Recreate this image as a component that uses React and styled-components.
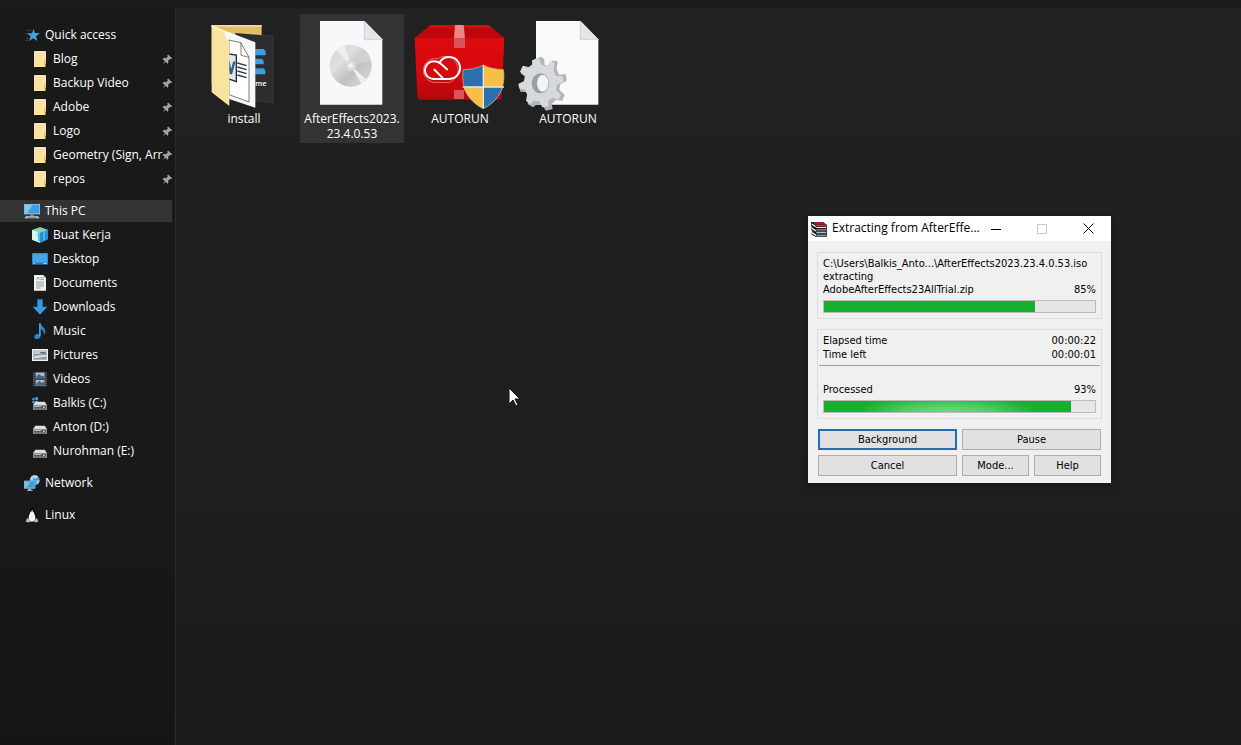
import React from 'react'
import styled, { createGlobalStyle } from 'styled-components'

const GlobalStyle = createGlobalStyle`
  * {
    box-sizing: border-box;
  }
  body {
    margin: 0;
    background: #1e1e1e;
    font-family: 'Open Sans', 'Noto Sans', sans-serif;
    font-size: 12px;
  }
`

const Explorer = styled.div`
  position: relative;
  display: flex;
  min-height: 100vh;
  overflow: hidden;
  border-top: 8px solid #1a1a1a;
  color: #fff;
  background: linear-gradient(#212121, #1f1f1f 60%, #1b1b1b);
`

const Sidebar = styled.nav`
  flex: none;
  width: 176px;
  padding-top: 15px;
  border-right: 1px solid #2b2b2b;
  background: linear-gradient(#191919, #191919 60%, #151515);
`

const Section = styled.div`
  display: flex;
  flex-direction: column;
  margin-bottom: 8px;
`

const NavItem = styled.a`
  display: flex;
  align-items: center;
  gap: 5px;
  height: 24px;
  margin-right: 3px;
  padding-left: ${props => (props.$nested ? 32 : 24)}px;
  border: solid transparent;
  border-width: 1px 0;
  background: ${props => (props.$active ? '#333333' : 'transparent')};
  background-clip: padding-box;
  color: #fff;
  text-decoration: none;
`

const NavLabel = styled.span`
  flex: 1;
  min-width: 0;
  padding-bottom: 2px;
  white-space: nowrap;
`

const SmallIcon = styled.svg`
  flex: none;
  width: 16px;
  height: 16px;
`

const Pin = styled.svg`
  flex: none;
  width: 11px;
  height: 11px;
  margin: 0 -1px 0 -5px;
`

const Files = styled.main`
  display: flex;
  flex: 1;
  flex-wrap: wrap;
  align-items: flex-start;
  align-content: flex-start;
  gap: 4px;
  padding: 6px 16px;
`

const FileTile = styled.button`
  display: flex;
  flex-direction: column;
  align-items: center;
  width: 104px;
  padding: 1px 0 2px;
  border: 0;
  background: ${props => (props.$selected ? '#333333' : 'transparent')};
  color: #fff;
  font: inherit;
  line-height: 15px;
`

const BigIcon = styled.svg`
  width: 96px;
  height: 96px;
`

const Dialog = styled.section`
  position: absolute;
  top: 208px;
  left: 808px;
  width: 303px;
  background: #f0f0f0;
  color: #000;
  font-family: 'DejaVu Sans Condensed', 'DejaVu Sans', sans-serif;
  font-size: 11px;
  box-shadow: 0 2px 8px rgba(0, 0, 0, 0.4);
`

const TitleBar = styled.header`
  display: flex;
  align-items: center;
  height: 25px;
  padding-left: 3px;
  background: #fff;
`

const Title = styled.h1`
  flex: 1;
  min-width: 0;
  margin: 0 0 0 5px;
  padding-bottom: 2px;
  font-family: 'Open Sans', 'Noto Sans', sans-serif;
  font-size: 12px;
  font-weight: 400;
  white-space: nowrap;
`

const WindowButton = styled.button`
  display: flex;
  flex: none;
  align-items: center;
  justify-content: center;
  width: 46px;
  height: 25px;
  padding: 0;
  border: 0;
  background: transparent;
`

const DialogBody = styled.div`
  display: flex;
  flex-direction: column;
  gap: 10px;
  padding: 11px 9px 7px;
`

const Group = styled.div`
  padding: 4px 5px 5px;
  border: 1px solid #dcdcdc;
`

const Path = styled.p`
  margin: 0;
  line-height: 13px;
  white-space: nowrap;
`

const Line = styled.div`
  display: flex;
  justify-content: space-between;
  line-height: 14px;
`

const Divider = styled.hr`
  height: 1px;
  margin: 3px -4px 17px;
  border: 0;
  background: #a0a0a0;
`

const Progress = styled.progress`
  display: block;
  width: 100%;
  height: 13px;
  margin-top: 3px;
  border: 1px solid #bcbcbc;
  appearance: none;

  &::-webkit-progress-bar {
    background: #e6e6e6;
  }
  &::-webkit-progress-value {
    background: ${props => (props.$glow
      ? 'radial-gradient(ellipse 90px 16px at 50% 100%, #6fdb7f, #4fc962 50%, #16b02f)'
      : '#16b02f')};
  }
`

const Actions = styled.div`
  display: grid;
  grid-template-columns: repeat(4, 1fr);
  gap: 5px;
  padding: 0 1px;
`

const ActionButton = styled.button`
  grid-column: span ${props => props.$span || 1};
  height: 21px;
  padding: 0;
  border: ${props => (props.$primary ? '2px solid #1f6fb8' : '1px solid #adadad')};
  background: #e1e1e1;
  color: #000;
  font: inherit;
`

const Cursor = styled.svg`
  position: absolute;
  top: 379px;
  left: 508px;
  width: 12px;
  height: 20px;
`

const FolderIcon = () => (
  <SmallIcon viewBox="0 0 48 48">
    <path d="M6 0h36v27H41v21H6z" fill="#f9e3a0" />
    <path d="M38 27h4v21h-6V36z" fill="#efc25e" />
    <path d="M39 39h3v9h-3z" fill="#8a8474" />
  </SmallIcon>
)

const StarIcon = () => (
  <SmallIcon viewBox="0 0 48 48">
    <path d="M8 10h14M4 21h12M6 34h10M4 40h8" stroke="#55565a" strokeWidth="2" />
    <path d="M29 6l4 12 15 1-12 9 4 14-12-8-13 8 5-14-11-9h15z" fill="#3da1e4" />
  </SmallIcon>
)

const PcIcon = () => (
  <SmallIcon viewBox="0 0 48 48">
    <path d="M0 3h48v31H0z" fill="#8fc9ee" />
    <path d="M2 5h44v26H2z" fill="#3b9fe3" />
    <path d="M3 6h22L10 30H3z" fill="#8ac5e8" />
    <path d="M18 34h12v5H18z" fill="#78848c" />
    <path d="M6 40h36l5 6H1z" fill="#d5dade" />
    <path d="M10 42h28v2H10z" fill="#697279" />
  </SmallIcon>
)

const CubeIcon = () => (
  <SmallIcon viewBox="0 0 48 48">
    <path d="M0 9l24-8 24 7v28l-24 11-24-9z" fill="#6fd3c7" />
    <path d="M0 9l24 8v30L0 38z" fill="#daf4e8" />
    <path d="M24 17l24-9v28L24 47z" fill="#248ddd" />
    <path d="M4 8l20-7 20 7-20 7z" fill="#98cca9" />
    <path d="M17 16l7 1v27l-6-3zM34 13l5-2v28l-5 3z" fill="#4dc2dc" />
  </SmallIcon>
)

const DesktopIcon = () => (
  <SmallIcon viewBox="0 0 48 48">
    <path d="M0 6h48v35H0z" fill="#2679bd" />
    <path d="M2 8h44v27H2z" fill="#41a6e8" />
    <path d="M4 37h5v2H4zM34 37h10v2H34z" fill="#d3e9f8" />
  </SmallIcon>
)

const DocumentIcon = () => (
  <SmallIcon viewBox="0 0 48 48">
    <path d="M6 0h28l8 8v39H6z" fill="#f3f3f0" />
    <path d="M33 0v9h9" fill="#c5c9ca" />
    <path d="M14 14l4-8 4 8M25 8h6M25 13h11M12 21h24M12 27h24M12 33h24M12 39h14" fill="none" stroke="#557270" strokeWidth="2" />
  </SmallIcon>
)

const DownloadIcon = () => (
  <SmallIcon viewBox="0 0 48 48">
    <path d="M16 1h16v22h14L24 47 2 23h14z" fill="#3598e0" />
    <path d="M16 1h16v3H16z" fill="#2174b3" />
  </SmallIcon>
)

const MusicIcon = () => (
  <SmallIcon viewBox="0 0 48 48">
    <path d="M22 1h4c2 11 14 13 14 24 0 5-2 8-5 11 2-9-2-15-9-17v19c0 6-5 10-11 10S7 45 7 41s4-8 10-8h5z" fill="#2587d4" />
    <path d="M22 1h3v37h-3z" fill="#73b4df" />
  </SmallIcon>
)

const PictureIcon = () => (
  <SmallIcon viewBox="0 0 48 48">
    <path d="M0 6h48v36H0z" fill="#f1f2f2" />
    <path d="M4 10h40v28H4z" fill="#8b999f" />
    <path d="M4 10h40v8c-14 0-22 4-40 4z" fill="#bcccd3" />
    <path d="M4 30c12-7 22-5 40-6v5c-16 0-25 5-40 4z" fill="#dbe1e2" />
    <path d="M25 15h15v4H25z" fill="#4f6e7e" />
  </SmallIcon>
)

const VideoIcon = () => (
  <SmallIcon viewBox="0 0 48 48">
    <path d="M3 3h42v43H3z" fill="#55585c" />
    <path d="M6 4v42M42 4v42" stroke="#202226" strokeWidth="4" strokeDasharray="3 3" />
    <path d="M12 5h25v17H12zM12 26h25v17H12z" fill="#b1bbc2" />
    <path d="M13 15l9-6 6 6 8 1v5H13zM13 38l9-9 6 6 9-3v10H13z" fill="#33699d" />
    <path d="M12 23h25v3H12z" fill="#252729" />
  </SmallIcon>
)

const DriveIcon = ({ system }) => (
  <SmallIcon viewBox="0 0 48 48">
    {system && <path d="M1 9l7-1v8H1zM10 7l8-1v10h-8zM1 18h7v7H1zM10 18h8v9h-8z" fill="#3ca5e7" />}
    <path d="M10 20h28l7 11H3z" fill="#dedede" />
    <path d="M3 30h42v14H3z" fill="#a8aaac" />
    <path d="M5 32h38v9H5z" fill="#56585a" />
    <path d="M7 34h20v2H7zM33 35h6v3h-6z" fill="#e0e0e0" />
  </SmallIcon>
)

const NetworkIcon = () => (
  <SmallIcon viewBox="0 0 48 48">
    <circle cx="32" cy="16" r="15" fill="#3c9bdc" />
    <path d="M20 8c4-9 18-9 23-2l-8 5-7-2-3 8-6-2z" fill="#b5d9e7" />
    <path d="M37 17l9-3c1 8-3 13-8 15z" fill="#a3cee7" />
    <path d="M0 17h34v24H0z" fill="#91c6e8" />
    <path d="M2 19h30v19H2z" fill="#399ddd" />
    <path d="M3 20h16L8 37H3z" fill="#82bfe0" />
    <path d="M14 41h6v4h-6zM9 44h17v3H9z" fill="#cfd5d9" />
  </SmallIcon>
)

const LinuxIcon = () => (
  <SmallIcon viewBox="0 0 48 48">
    <path d="M18 9c0-10 13-10 13 0 0 9 9 16 9 27 0 6-5 10-16 10S9 42 9 36c0-11 9-18 9-27z" fill="#080808" />
    <path d="M24 13c5 0 6 5 8 10 4 8 3 21-8 21s-12-13-8-21c2-5 3-10 8-10z" fill="#f4f4f4" />
    <path d="M21 9h7l-3 4z" fill="#dfb64c" />
    <path d="M10 33l9 9c0 5-5 5-14 2 2-3 2-8 5-11zM38 33l-8 9c0 5 5 5 13 2-2-3-2-8-5-11z" fill="#c6b99a" />
  </SmallIcon>
)

const PinIcon = () => (
  <Pin viewBox="0 0 36 36" aria-hidden="true">
    <path d="M20 2l13 12-4 3-3-1-6 6 1 7-3 3-7-7-9 9 7-11-7-7 4-4 7 2 6-6-2-3z" fill="#a0a3a6" />
  </Pin>
)

const InstallIcon = () => (
  <BigIcon viewBox="3 30 288 288">
    <path d="M50 60h150v180H50z" fill="#dfbd69" />
    <path d="M50 60h150v5H50z" fill="#f3dc9c" />
    <path d="M120 84l114 9v200l-54-5z" fill="#2d2d2f" />
    <path d="M180 89l54 4v200l-54-5" fill="none" stroke="#77777a" strokeWidth="1" strokeDasharray="3 2" />
    <path d="M181 132h25l6 7v12h-31zM181 161h20l5 7v10h-25zM181 190h25l5 6v12h-30z" fill="#3b9fe2" />
    <text x="181" y="243" fill="#fff" fontFamily="Open Sans" fontSize="22" fontWeight="600">me</text>
    <path d="M85 75l96 37v196l-81-27z" fill="#f6f7f8" />
    <path d="M102 105l35 8 25 44v134l-60-22z" fill="#fff" stroke="#3c3e40" strokeWidth="2" />
    <path d="M138 113v38l24 6" fill="none" stroke="#3c3e40" strokeWidth="2" />
    <path d="M90 145l34 5v80l-34-12z" fill="#dfe9f1" stroke="#27292b" strokeWidth="4" />
    <path d="M100 167l8 40 10-37" fill="none" stroke="#285d8c" strokeWidth="7" />
    <path d="M127 174l28 8M127 186l28 8M127 198l28 8M127 210l28 8" stroke="#273f50" strokeWidth="4" />
    <path d="M50 60l35 15 18 38v190l-53-41z" fill="#f9e3a0" />
    <path d="M50 60l35 15 18 38v8L83 80 50 66z" fill="#fff0bd" />
  </BigIcon>
)

const DiscIcon = () => (
  <BigIcon viewBox="327 30 288 288">
    <defs>
      <linearGradient id="disc" x1="0" y1="0" x2="1" y2="1">
        <stop offset="0" stopColor="#d5d6d7" />
        <stop offset="0.35" stopColor="#dedfdf" />
        <stop offset="0.6" stopColor="#bfc1c3" />
        <stop offset="1" stopColor="#dcdddd" />
      </linearGradient>
    </defs>
    <path d="M375 48h133l54 55v196H375z" fill="#f7f8f9" />
    <path d="M508 48l54 55h-54z" fill="#e4e6e8" stroke="#b9c4cc" strokeWidth="2" />
    <circle cx="467" cy="182" r="63" fill="url(#disc)" />
    <path d="M467 182L424 136q12-12 26-15zM467 182l47 41-14 15z" fill="#efefef" />
    <path d="M467 182l61-15a62 62 0 0 0-24-36z" fill="#cfd0d2" />
    <circle cx="467" cy="182" r="16" fill="#d9dadb" />
    <circle cx="467" cy="182" r="7" fill="#f4f4f4" />
  </BigIcon>
)

const AdobeIcon = () => (
  <BigIcon viewBox="21 30 288 288">
    <defs>
      <linearGradient id="box" x1="0" y1="0" x2="0" y2="1">
        <stop offset="0" stopColor="#e20b0f" />
        <stop offset="0.65" stopColor="#d4090e" />
        <stop offset="1" stopColor="#b2070b" />
      </linearGradient>
    </defs>
    <path d="M77 60h174l47 40-8 175q-1 9-10 9H48q-10 0-11-9L29 100z" fill="url(#box)" />
    <path d="M77 60h174l47 40H29z" fill="#bd070c" />
    <path d="M77 60h174l10 9H67z" fill="#d40b10" />
    <path d="M150 60h26l4 40h-33z" fill="#ef8585" />
    <path d="M147 100h33v29h-33zM147 255h30v27h-30z" fill="#d95358" />
    <g fill="none" strokeLinecap="round" strokeLinejoin="round">
      <path d="M84 232a35 35 0 0 1 14-71A40 40 0 1 1 134 232z" stroke="#f49597" strokeWidth="2" />
      <path d="M126 193l-20-18c-7-5-13-6-20-6a26 26 0 0 0 0 53h46a33 33 0 1 0-28-50" stroke="#fff" strokeWidth="6" />
      <path d="M88 194l24 24" stroke="#fff" strokeWidth="6" />
    </g>
    <path d="M235 180c-17 10-43 14-60 14-8 43 9 92 60 117z" fill="#2b70ad" />
    <path d="M235 180c17 10 43 14 60 14 8 43-9 92-60 117z" fill="#f9be48" />
    <path d="M175 246h60v65c-30-15-51-38-60-65z" fill="#f9be48" />
    <path d="M235 246h60c-9 27-30 50-60 65z" fill="#2b70ad" />
    <path d="M235 181v129M173 246h124" stroke="#e5e9e8" strokeWidth="4" />
    <path d="M235 180c17 10 43 14 60 14 8 43-9 92-60 117-51-25-68-74-60-117 17 0 43-4 60-14z" fill="none" stroke="#d6c67e" strokeWidth="2" />
  </BigIcon>
)

const SettingsFileIcon = () => (
  <BigIcon viewBox="345 30 288 288" overflow="visible">
    <path d="M393 48h133l54 55v196H393z" fill="#f8f9f9" />
    <path d="M526 48l54 55h-54z" fill="#e4e6e8" stroke="#b9c4cc" strokeWidth="2" />
    <g transform="translate(5 0)">
      <path d="M383 163l20-8 9 6 2 18 16 5 5-17 18 1-3 23 7 18 20-2 3 20-19 11-3 16 16 15-7 18-20-2-12 12 3 15-20 5-12-17-15-2-12 9-16-10 2-22-8-14-16-1-3-18 16-9 3-16-15-12 7-23 18 4 10-8z" fill="#b3b6b8" />
      <path d="M376 166l20-8 8 21 16 5 12-15 12 6-3 21 7 18 20-1 2 17-19 9-3 16 15 15-8 14-18-6-12 10v16l-18 3-9-18-15-2-13 10-12-10 4-20-8-14-16-2-3-14 17-9 3-16-15-12 8-17 17 5 12-9z" fill="#d7dadc" />
      <ellipse cx="401" cy="235" rx="26" ry="30" fill="#9b9fa2" />
      <ellipse cx="408" cy="235" rx="17" ry="25" fill="#f3f4f4" />
    </g>
  </BigIcon>
)

const WinrarIcon = () => (
  <SmallIcon viewBox="0 0 48 48">
    <path d="M0 3h36l12 9v35H14L2 41v-8l3-2-4-3v-7l3-2-4-3z" fill="#19191c" />
    <path d="M5 3h31l9 8H15z" fill="#a91b29" />
    <path d="M15 12h32v4H15z" fill="#d6344b" />
    <path d="M2 9l12 8M3 22l12 8M3 35l12 8" stroke="#f2f2ee" strokeWidth="4" />
    <path d="M16 18h30v3H16zM16 32h30v3H16z" fill="#eee" />
    <path d="M16 24h31v5H16z" fill="#6c7780" />
    <path d="M16 37h31v4H16z" fill="#2f6d6a" />
    <path d="M17 43h29v2H17z" fill="#dcdcdc" />
  </SmallIcon>
)

const quickAccess = ['Blog', 'Backup Video', 'Adobe', 'Logo', 'Geometry (Sign, Arr', 'repos']

const places = [
  { name: 'Buat Kerja', icon: <CubeIcon /> },
  { name: 'Desktop', icon: <DesktopIcon /> },
  { name: 'Documents', icon: <DocumentIcon /> },
  { name: 'Downloads', icon: <DownloadIcon /> },
  { name: 'Music', icon: <MusicIcon /> },
  { name: 'Pictures', icon: <PictureIcon /> },
  { name: 'Videos', icon: <VideoIcon /> },
  { name: 'Balkis (C:)', icon: <DriveIcon system /> },
  { name: 'Anton (D:)', icon: <DriveIcon /> },
  { name: 'Nurohman (E:)', icon: <DriveIcon /> },
]

const NavLink = ({ icon, name, nested, active, pinned }) => (
  <NavItem href="#" $nested={nested} $active={active}>
    {icon}
    <NavLabel>{name}</NavLabel>
    {pinned && <PinIcon />}
  </NavItem>
)

const Navigation = () => (
  <Sidebar>
    <Section>
      <NavLink icon={<StarIcon />} name="Quick access" />
      {quickAccess.map(name => (
        <NavLink key={name} icon={<FolderIcon />} name={name} nested pinned />
      ))}
    </Section>
    <Section>
      <NavLink icon={<PcIcon />} name="This PC" active />
      {places.map(place => (
        <NavLink key={place.name} icon={place.icon} name={place.name} nested />
      ))}
    </Section>
    <Section>
      <NavLink icon={<NetworkIcon />} name="Network" />
    </Section>
    <Section>
      <NavLink icon={<LinuxIcon />} name="Linux" />
    </Section>
  </Sidebar>
)

const ExtractDialog = () => (
  <Dialog role="dialog" aria-labelledby="dialog-title">
    <TitleBar>
      <WinrarIcon />
      <Title id="dialog-title">Extracting from AfterEffe...</Title>
      <WindowButton aria-label="Minimize">
        <svg width="10" height="10"><path d="M0 5.5h10" stroke="#000" /></svg>
      </WindowButton>
      <WindowButton aria-label="Maximize" disabled>
        <svg width="10" height="10"><path d="M.5.5h9v9h-9z" fill="none" stroke="#c4c8cb" /></svg>
      </WindowButton>
      <WindowButton aria-label="Close">
        <svg width="11" height="11"><path d="M.5.5l10 10M10.5.5l-10 10" stroke="#000" /></svg>
      </WindowButton>
    </TitleBar>
    <DialogBody>
      <Group>
        <Path>C:\Users\Balkis_Anto...\AfterEffects2023.23.4.0.53.iso</Path>
        <Path>extracting</Path>
        <Line>
          <label htmlFor="file-progress">AdobeAfterEffects23AllTrial.zip</label>
          <span>85%</span>
        </Line>
        <Progress id="file-progress" max="100" value="78" />
      </Group>
      <Group>
        <Line><span>Elapsed time</span><span>00:00:22</span></Line>
        <Line><span>Time left</span><span>00:00:01</span></Line>
        <Divider />
        <Line>
          <label htmlFor="total-progress">Processed</label>
          <span>93%</span>
        </Line>
        <Progress id="total-progress" max="100" value="91" $glow />
      </Group>
      <Actions>
        <ActionButton $span={2} $primary>Background</ActionButton>
        <ActionButton $span={2}>Pause</ActionButton>
        <ActionButton $span={2}>Cancel</ActionButton>
        <ActionButton>Mode...</ActionButton>
        <ActionButton>Help</ActionButton>
      </Actions>
    </DialogBody>
  </Dialog>
)

const App = () => (
  <>
    <GlobalStyle />
    <Explorer>
      <Navigation />
      <Files>
        <FileTile><InstallIcon />install</FileTile>
        <FileTile $selected><DiscIcon />AfterEffects2023.<br />23.4.0.53</FileTile>
        <FileTile><AdobeIcon />AUTORUN</FileTile>
        <FileTile><SettingsFileIcon />AUTORUN</FileTile>
      </Files>
      <ExtractDialog />
      <Cursor viewBox="0 0 12 20">
        <path d="M1 1v16l4-4 3 6 2-1-3-6h5z" fill="#fff" stroke="#111" strokeWidth="1" />
      </Cursor>
    </Explorer>
  </>
)

export default App
